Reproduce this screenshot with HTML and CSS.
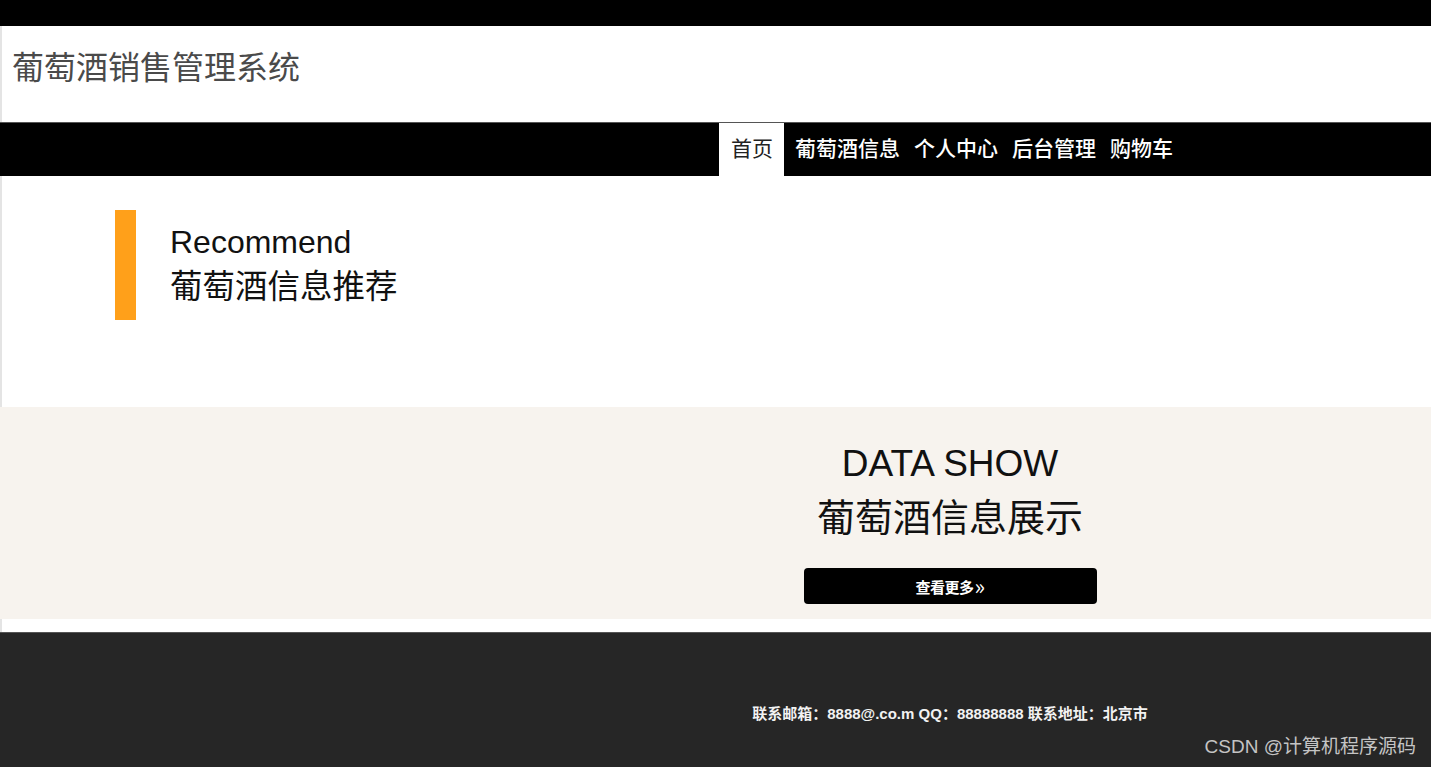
FILE: index.html
```html
<!DOCTYPE html>
<html lang="zh">
<head>
<meta charset="utf-8">
<title>葡萄酒销售管理系统</title>
<link rel="stylesheet" href="styles.css">
</head>
<body>
<div class="topbar"></div>
<header class="header">
  <h1 class="site-title">葡萄酒销售管理系统</h1>
</header>
<nav class="nav">
  <ul class="nav-list">
    <li class="nav-item active">首页</li>
    <li class="nav-item first">葡萄酒信息</li>
    <li class="nav-item">个人中心</li>
    <li class="nav-item">后台管理</li>
    <li class="nav-item">购物车</li>
  </ul>
</nav>
<section class="recommend">
  <div class="rec-head">
    <div class="rec-bar"></div>
    <div class="rec-titles">
      <div class="rec-en">Recommend</div>
      <div class="rec-cn">葡萄酒信息推荐</div>
    </div>
  </div>
</section>
<section class="datashow">
  <div class="ds-inner">
    <div class="ds-en">DATA SHOW</div>
    <div class="ds-cn">葡萄酒信息展示</div>
    <a class="ds-btn">查看更多<span class="chev">»</span></a>
  </div>
</section>
<div class="spacer"></div>
<footer class="footer">
  <p class="footer-text">联系邮箱：8888@.co.m QQ：88888888 联系地址：北京市</p>
  <span class="watermark">CSDN @计算机程序源码</span>
</footer>
</body>
</html>
```

FILE: styles.css
```css
* { box-sizing: border-box; }
html, body { margin: 0; padding: 0; }
body {
  width: 1431px;
  height: 767px;
  overflow: hidden;
  background: #fff;
  font-family: "Liberation Sans", "Noto Sans CJK SC", sans-serif;
  position: relative;
}
.topbar { height: 26px; background: #000; }
.header {
  height: 96px;
  border-left: 2px solid #e4e4e4;
  display: flex;
  align-items: center;
  padding-left: 10px;
}
.site-title {
  margin: 0;
  font-family: "Noto Sans CJK SC", sans-serif;
  font-weight: 400;
  font-size: 32px;
  color: #4a4a4a;
  line-height: 1;
  position: relative;
  top: -9px;
}
.nav {
  height: 54px;
  background: #000;
  border-top: 1px solid #555;
}
.nav-list {
  list-style: none;
  margin: 0;
  padding: 0 0 0 719px;
  display: flex;
  height: 100%;
}
.nav-item {
  font-family: "Noto Sans CJK SC", sans-serif;
  font-weight: 500;
  font-size: 21px;
  color: #fff;
  padding: 0 7px 5px;
  display: flex;
  align-items: center;
  height: 100%;
}
.nav-item.active {
  background: #fff;
  color: #222;
  font-weight: 400;
  padding: 0 11px 5px 12px;
}
.nav-item.first { margin-left: 4px; }
.recommend {
  height: 231px;
  border-left: 2px solid #e4e4e4;
  padding: 34px 0 0 113px;
}
.rec-head { display: flex; align-items: center; height: 110px; }
.rec-bar { width: 21px; height: 110px; background: #ffa01a; }
.rec-titles { margin-left: 34px; padding-bottom: 2px; }
.rec-en {
  font-size: 32px;
  line-height: 40px;
  color: #111;
}
.rec-cn {
  font-family: "Noto Sans CJK SC", sans-serif;
  font-size: 32.5px;
  line-height: 44px;
  color: #111;
}
.datashow {
  height: 212px;
  background: #f7f3ee;
  padding-left: 469px;
  display: flex;
  justify-content: center;
}
.ds-inner {
  display: flex;
  flex-direction: column;
  align-items: center;
  padding-top: 35px;
}
.ds-en {
  font-size: 37px;
  line-height: 44px;
  color: #111;
}
.ds-cn {
  font-family: "Noto Sans CJK SC", sans-serif;
  font-size: 38px;
  line-height: 50px;
  color: #111;
  margin-top: 4px;
}
.ds-btn {
  margin-top: 28px;
  width: 293px;
  height: 36px;
  background: #000;
  border-radius: 4px;
  color: #fff;
  font-family: "Noto Sans CJK SC", sans-serif;
  font-weight: 700;
  font-size: 15px;
  display: flex;
  align-items: center;
  justify-content: center;
  text-decoration: none;
  letter-spacing: -0.5px;
}
.chev { font-size: 22px; line-height: 1; font-weight: 400; margin-left: 1px; position: relative; top: -1px; }
.spacer { height: 13px; border-left: 2px solid #e4e4e4; }
.footer {
  height: 135px;
  background: #262626;
  border-top: 1px solid #555;
  padding-left: 469px;
  display: flex;
  justify-content: center;
}
.footer-text {
  margin: 71px 0 0 0;
  font-family: "Liberation Sans", "Noto Sans CJK SC", sans-serif;
  font-weight: 700;
  font-size: 15px;
  line-height: 20px;
  color: #f2f2f2;
}
.watermark {
  position: absolute;
  right: 15px;
  bottom: 9px;
  font-family: "Liberation Sans", "Noto Sans CJK SC", sans-serif;
  font-size: 19px;
  color: #c4c4c4;
}
```
